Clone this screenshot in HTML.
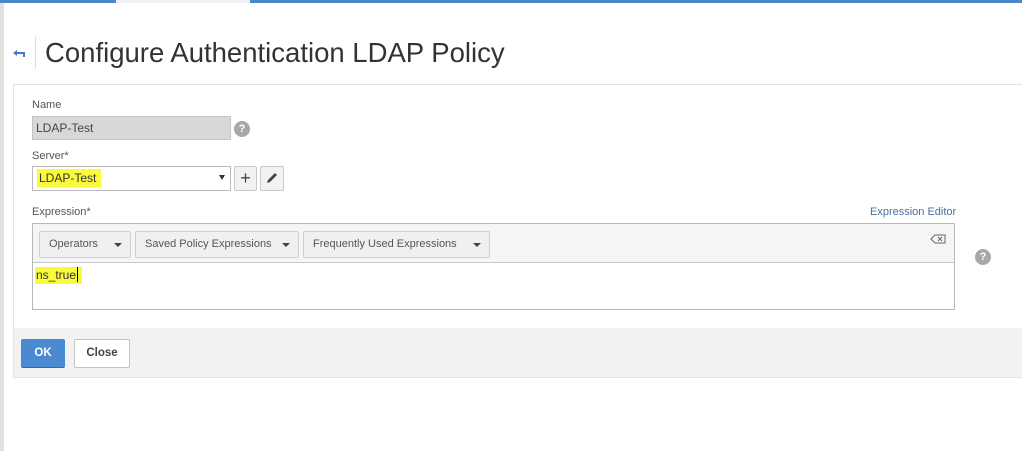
<!DOCTYPE html>
<html><head><style>
*{box-sizing:border-box;margin:0;padding:0}
body{width:1022px;height:451px;background:#fff;position:relative;overflow:hidden;font-family:"Liberation Sans",sans-serif;color:#333}
.a{position:absolute}
.lbl{font-size:11px;color:#555}
.btn{position:absolute;background:#f0f0f0;border:1px solid #cfcfcf;border-radius:2px;font-size:11px;color:#555;line-height:25px;padding-left:9px;white-space:nowrap}
.btn .c{position:absolute;right:8px;top:11px;border-left:4px solid transparent;border-right:4px solid transparent;border-top:4px solid #444}
.q{position:absolute;width:16px;height:16px;border-radius:50%;background:#a8a8a8;color:#fff;font-size:11px;font-weight:bold;text-align:center;line-height:16px}
</style></head><body>
<div class="a" style="left:0;top:0;width:116px;height:3px;background:#4a86c8"></div>
<div class="a" style="left:116px;top:0;width:134px;height:3px;background:#eef2f7"></div>
<div class="a" style="left:250px;top:0;width:772px;height:3px;background:#4a86c8"></div>
<div class="a" style="left:0;top:3px;width:4px;height:448px;background:#e2e2e2"></div>
<svg class="a" style="left:12px;top:46px" width="16" height="14" viewBox="0 0 16 14"><path d="M3 7H12V11" stroke="#3d7fc8" stroke-width="2" fill="none"/><path d="M1 7L5 4V10Z" fill="#3d7fc8"/></svg>
<div class="a" style="left:35px;top:36px;width:1px;height:33px;background:#ddd"></div>
<div class="a" style="left:45px;top:37px;font-size:27.5px;color:#333;white-space:nowrap">Configure Authentication LDAP Policy</div>
<div class="a" style="left:13px;top:84px;width:1012px;height:294px;border:1px solid #e4e4e4;background:#fff"></div>
<div class="a" style="left:14px;top:328px;width:1008px;height:49px;background:#f2f2f2"></div>
<div class="a lbl" style="left:32px;top:99px">Name</div>
<div class="a" style="left:32px;top:116px;width:199px;height:24px;background:#d8d8d8;border:1px solid #c4c4c4;font-size:12px;line-height:22px;padding-left:3px;color:#444">LDAP-Test</div>
<div class="q" style="left:234px;top:121px">?</div>
<div class="a lbl" style="left:32px;top:150px">Server*</div>
<div class="a" style="left:32px;top:166px;width:199px;height:25px;background:#fff;border:1px solid #bbb"></div>
<div class="a" style="left:37px;top:169px;width:64px;height:18px;background:#fafa3c"></div>
<div class="a" style="left:39px;top:171px;font-size:12px;color:#333">LDAP-Test</div>
<div class="a" style="left:219px;top:175px;border-left:3.5px solid transparent;border-right:3.5px solid transparent;border-top:5px solid #333"></div>
<div class="a" style="left:234px;top:166px;width:23px;height:25px;background:#f2f2f2;border:1px solid #c8c8c8;border-radius:2px;font-size:18px;text-align:center;line-height:22px;color:#444">+</div>
<div class="a" style="left:260px;top:166px;width:24px;height:25px;background:#f2f2f2;border:1px solid #c8c8c8;border-radius:2px"></div>
<svg class="a" style="left:265px;top:171px" width="14" height="14" viewBox="0 0 14 14"><path d="M2 12L3 9L10 2L12 4L5 11Z" fill="#444"/></svg>
<div class="a lbl" style="left:32px;top:206px">Expression*</div>
<div class="a" style="left:870px;top:206px;font-size:11px;color:#4a6f99">Expression Editor</div>
<div class="a" style="left:32px;top:223px;width:923px;height:87px;border:1px solid #b8b8b8;background:#fff"></div>
<div class="a" style="left:33px;top:224px;width:921px;height:39px;background:#f5f5f5;border-bottom:1px solid #c8c8c8"></div>
<div class="btn" style="left:39px;top:231px;width:92px;height:27px">Operators<span class="c"></span></div>
<div class="btn" style="left:135px;top:231px;width:164px;height:27px">Saved Policy Expressions<span class="c"></span></div>
<div class="btn" style="left:303px;top:231px;width:187px;height:27px">Frequently Used Expressions<span class="c"></span></div>
<svg class="a" style="left:930px;top:234px" width="16" height="10" viewBox="0 0 16 10"><path d="M1 5L5 1H15V9H5Z" fill="none" stroke="#666"/><path d="M8 3L12 7M12 3L8 7" stroke="#666"/></svg>
<div class="a" style="left:35px;top:267px;width:47px;height:17px;background:#fafa3c"></div>
<div class="a" style="left:36px;top:268px;font-size:12px;color:#333">ns_true</div>
<div class="a" style="left:77px;top:267px;width:1px;height:15px;background:#000"></div>
<div class="q" style="left:975px;top:249px">?</div>
<div class="a" style="left:21px;top:339px;width:44px;height:29px;background:#4a8ad0;border-radius:2px;border-bottom:1px solid #2f6aab;color:#fff;font-size:11.5px;font-weight:bold;text-align:center;line-height:28px">OK</div>
<div class="a" style="left:74px;top:339px;width:56px;height:29px;background:#fff;border:1px solid #c4c4c4;border-radius:2px;color:#444;font-size:11.5px;font-weight:bold;text-align:center;line-height:27px">Close</div>
</body></html>
